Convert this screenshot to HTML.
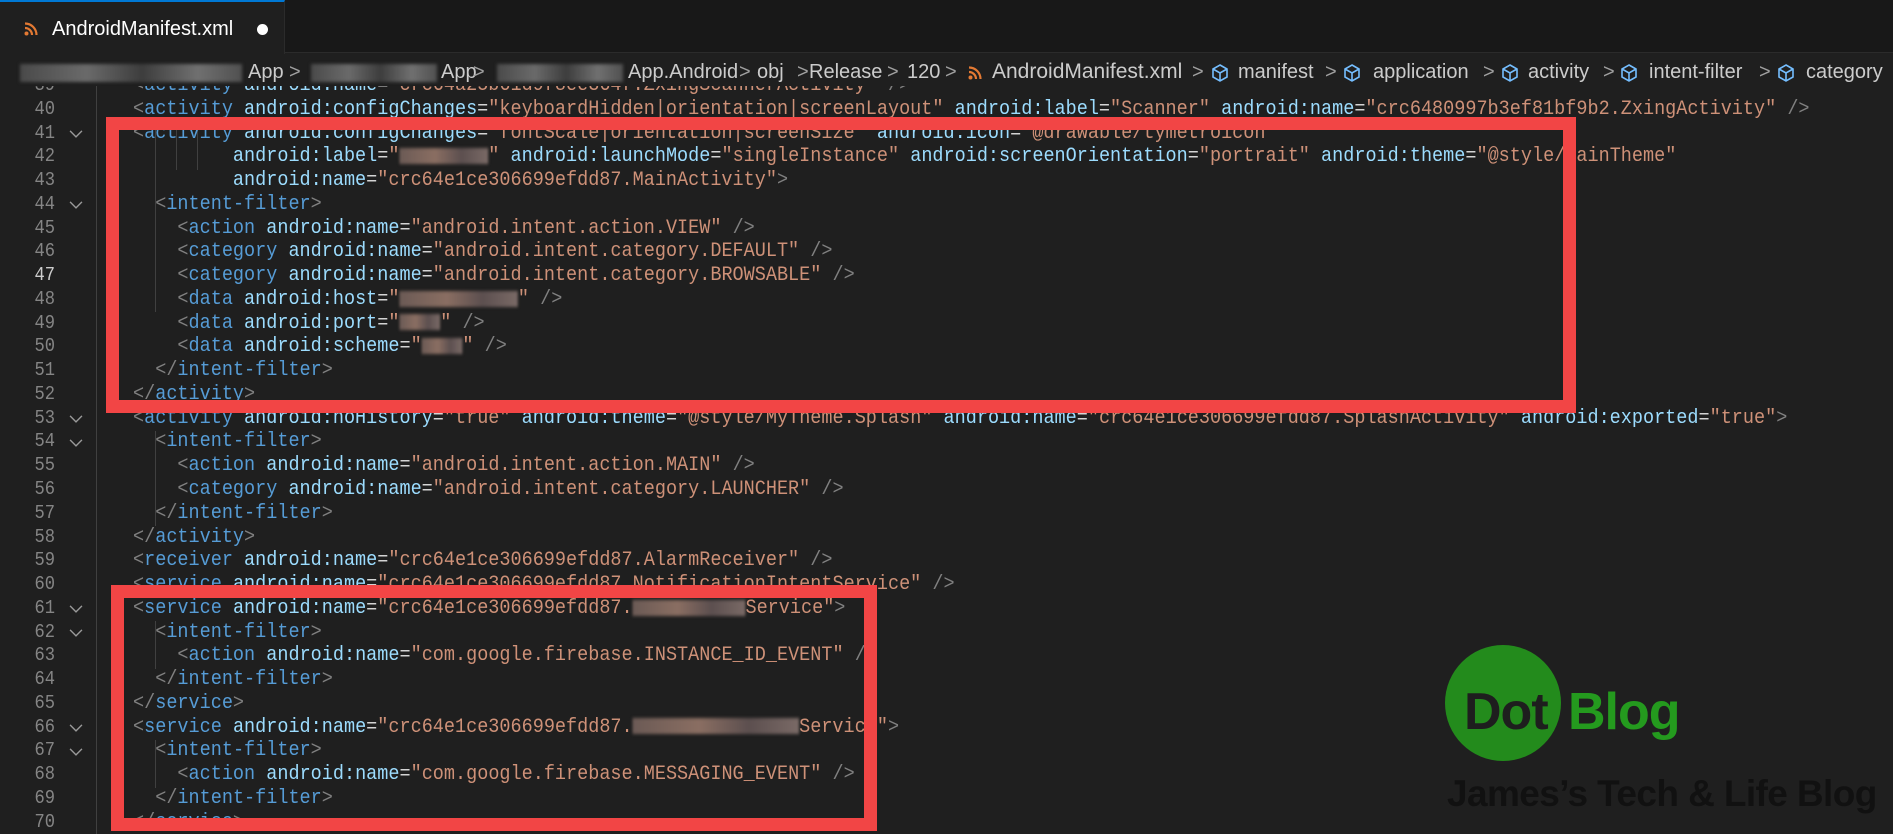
<!DOCTYPE html>
<html><head><meta charset="utf-8"><style>
*{margin:0;padding:0;box-sizing:border-box}
body{width:1893px;height:834px;background:#1f1f1f;overflow:hidden;position:relative;font-family:"Liberation Sans",sans-serif}
#tabbar{position:absolute;left:0;top:0;width:1893px;height:53px;background:#181818;border-bottom:1px solid #2b2b2b}
#tab{position:absolute;left:0;top:0;width:285px;height:54px;background:#1f1f1f;border-top:2px solid #0078d4;border-right:1px solid #2b2b2b}
#tab .name{position:absolute;left:52px;top:16px;color:#ffffff;font-size:20px}
#tab .dot{position:absolute;left:257px;top:22px;width:11px;height:11px;border-radius:50%;background:#fff}
.bc{position:absolute;top:61px;color:#cccccc;font-size:20px;white-space:nowrap}
.sep{position:absolute;top:61px;color:#a0a0a0;font-size:20px}
.blur{display:inline-block;background:linear-gradient(90deg,#4a4a4a,#6a6a6a 30%,#3d3d3d 55%,#707070 80%,#505050);filter:blur(1.5px);vertical-align:middle}
#editor{position:absolute;left:0;top:86px;width:1893px;height:748px;overflow:hidden}
pre{position:absolute;left:133px;top:-12px;font-family:"Liberation Mono",monospace;font-size:20px;line-height:23.77px;color:#d4d4d4;transform:scaleX(0.925);transform-origin:0 0}
.ln{position:absolute;left:0;top:-12px;width:55px;text-align:right;font-family:"Liberation Mono",monospace;font-size:19px;line-height:23.77px;color:#858585;transform:scaleX(0.9);transform-origin:100% 0}
.fold{position:absolute;left:68px;width:16px;height:23.77px}
.p{color:#808080}.t{color:#569cd6}.a{color:#9cdcfe}.s{color:#ce9178}
.guide{position:absolute;width:1px;background:#404040}
.box{position:absolute;border:13px solid #f24545}
.sb{display:inline-block;height:16px;background:linear-gradient(90deg,#6b5a55,#8a6e62 40%,#5c4f4f 70%,#7a6a66);filter:blur(1.5px);vertical-align:middle}
</style></head><body>
<div id="tabbar"></div>
<div id="tab">
<svg style="position:absolute;left:24px;top:20px" width="14" height="14" viewBox="0 0 14 14"><circle cx="2.5" cy="11.5" r="2" fill="#e37933"/><path d="M1 6a7 7 0 0 1 7 7M1 1.5a11.5 11.5 0 0 1 11.5 11.5" stroke="#e37933" stroke-width="2.2" fill="none"/></svg>
<span class="name">AndroidManifest.xml</span><span class="dot"></span></div>

<span class="bc" style="left:20px"><span class="blur" style="width:222px;height:18px"></span></span>
<span class="bc" style="left:248px">App</span><span class="sep" style="left:289px">&gt;</span>
<span class="bc" style="left:311px"><span class="blur" style="width:126px;height:18px"></span></span>
<span class="bc" style="left:441px">App</span><span class="sep" style="left:473px">&gt;</span>
<span class="bc" style="left:497px"><span class="blur" style="width:126px;height:18px"></span></span>
<span class="bc" style="left:628px">App.Android</span><span class="sep" style="left:739px">&gt;</span>
<span class="bc" style="left:757px">obj</span><span class="sep" style="left:797px">&gt;</span>
<span class="bc" style="left:809px">Release</span><span class="sep" style="left:887px">&gt;</span>
<span class="bc" style="left:907px">120</span><span class="sep" style="left:945px">&gt;</span>
<svg style="position:absolute;left:968px;top:66px" width="14" height="14" viewBox="0 0 14 14"><circle cx="2.5" cy="11.5" r="2" fill="#e37933"/><path d="M1 6a7 7 0 0 1 7 7M1 1.5a11.5 11.5 0 0 1 11.5 11.5" stroke="#e37933" stroke-width="2.2" fill="none"/></svg>
<span class="bc" style="left:992px;font-size:21px;top:60px">AndroidManifest.xml</span><span class="sep" style="left:1192px">&gt;</span>
<svg style="position:absolute;left:1210px;top:63px" width="20" height="20" viewBox="0 0 20 20"><path d="M10 2l7 4v8l-7 4-7-4V6zM3 6l7 4 7-4M10 10v8" stroke="#75beff" stroke-width="1.6" fill="none"/></svg>
<span class="bc" style="left:1238px">manifest</span><span class="sep" style="left:1325px">&gt;</span>
<svg style="position:absolute;left:1342px;top:63px" width="20" height="20" viewBox="0 0 20 20"><path d="M10 2l7 4v8l-7 4-7-4V6zM3 6l7 4 7-4M10 10v8" stroke="#75beff" stroke-width="1.6" fill="none"/></svg>
<span class="bc" style="left:1373px">application</span><span class="sep" style="left:1483px">&gt;</span>
<svg style="position:absolute;left:1500px;top:63px" width="20" height="20" viewBox="0 0 20 20"><path d="M10 2l7 4v8l-7 4-7-4V6zM3 6l7 4 7-4M10 10v8" stroke="#75beff" stroke-width="1.6" fill="none"/></svg>
<span class="bc" style="left:1528px">activity</span><span class="sep" style="left:1603px">&gt;</span>
<svg style="position:absolute;left:1619px;top:63px" width="20" height="20" viewBox="0 0 20 20"><path d="M10 2l7 4v8l-7 4-7-4V6zM3 6l7 4 7-4M10 10v8" stroke="#75beff" stroke-width="1.6" fill="none"/></svg>
<span class="bc" style="left:1649px">intent-filter</span><span class="sep" style="left:1759px">&gt;</span>
<svg style="position:absolute;left:1776px;top:63px" width="20" height="20" viewBox="0 0 20 20"><path d="M10 2l7 4v8l-7 4-7-4V6zM3 6l7 4 7-4M10 10v8" stroke="#75beff" stroke-width="1.6" fill="none"/></svg>
<span class="bc" style="left:1806px">category</span>

<div id="editor">
<div class="ln">39<br>40<br>41<br>42<br>43<br>44<br>45<br>46<br><span style="color:#cccccc">47</span><br>48<br>49<br>50<br>51<br>52<br>53<br>54<br>55<br>56<br>57<br>58<br>59<br>60<br>61<br>62<br>63<br>64<br>65<br>66<br>67<br>68<br>69<br>70<br>71</div>
<svg class="fold" style="top:36px" viewBox="0 0 16 24"><path d="M2 9l6 6 6-6" stroke="#9a9a9a" stroke-width="1.4" fill="none"/></svg>
<svg class="fold" style="top:107px" viewBox="0 0 16 24"><path d="M2 9l6 6 6-6" stroke="#9a9a9a" stroke-width="1.4" fill="none"/></svg>
<svg class="fold" style="top:321px" viewBox="0 0 16 24"><path d="M2 9l6 6 6-6" stroke="#9a9a9a" stroke-width="1.4" fill="none"/></svg>
<svg class="fold" style="top:345px" viewBox="0 0 16 24"><path d="M2 9l6 6 6-6" stroke="#9a9a9a" stroke-width="1.4" fill="none"/></svg>
<svg class="fold" style="top:511px" viewBox="0 0 16 24"><path d="M2 9l6 6 6-6" stroke="#9a9a9a" stroke-width="1.4" fill="none"/></svg>
<svg class="fold" style="top:535px" viewBox="0 0 16 24"><path d="M2 9l6 6 6-6" stroke="#9a9a9a" stroke-width="1.4" fill="none"/></svg>
<svg class="fold" style="top:630px" viewBox="0 0 16 24"><path d="M2 9l6 6 6-6" stroke="#9a9a9a" stroke-width="1.4" fill="none"/></svg>
<svg class="fold" style="top:654px" viewBox="0 0 16 24"><path d="M2 9l6 6 6-6" stroke="#9a9a9a" stroke-width="1.4" fill="none"/></svg>
<div class="guide" style="left:96px;top:0;height:748px"></div>
<div class="guide" style="left:155px;top:36px;height:190px"></div>
<div class="guide" style="left:176px;top:36px;height:48px"></div>
<div class="guide" style="left:197px;top:36px;height:48px"></div>
<div class="guide" style="left:155px;top:345px;height:95px"></div>
<div class="guide" style="left:155px;top:535px;height:48px"></div>
<div class="guide" style="left:155px;top:654px;height:48px"></div>
<pre><span class="p">&lt;</span><span class="t">activity</span> <span class="a">android:name</span>=<span class="s">"crc64a25b61d9f8ee364f.ZxingScannerActivity"</span> <span class="p">/&gt;</span>
<span class="p">&lt;</span><span class="t">activity</span> <span class="a">android:configChanges</span>=<span class="s">"keyboardHidden|orientation|screenLayout"</span> <span class="a">android:label</span>=<span class="s">"Scanner"</span> <span class="a">android:name</span>=<span class="s">"crc6480997b3ef81bf9b2.ZxingActivity"</span> <span class="p">/&gt;</span>
<span class="p">&lt;</span><span class="t">activity</span> <span class="a">android:configChanges</span>=<span class="s">"fontScale|orientation|screenSize"</span> <span class="a">android:icon</span>=<span class="s">"@drawable/tymetroicon"</span>
         <span class="a">android:label</span>=<span class="s">"<span class="sb" style="width:96px"></span>"</span> <span class="a">android:launchMode</span>=<span class="s">"singleInstance"</span> <span class="a">android:screenOrientation</span>=<span class="s">"portrait"</span> <span class="a">android:theme</span>=<span class="s">"@style/MainTheme"</span>
         <span class="a">android:name</span>=<span class="s">"crc64e1ce306699efdd87.MainActivity"</span><span class="p">&gt;</span>
  <span class="p">&lt;</span><span class="t">intent-filter</span><span class="p">&gt;</span>
    <span class="p">&lt;</span><span class="t">action</span> <span class="a">android:name</span>=<span class="s">"android.intent.action.VIEW"</span> <span class="p">/&gt;</span>
    <span class="p">&lt;</span><span class="t">category</span> <span class="a">android:name</span>=<span class="s">"android.intent.category.DEFAULT"</span> <span class="p">/&gt;</span>
    <span class="p">&lt;</span><span class="t">category</span> <span class="a">android:name</span>=<span class="s">"android.intent.category.BROWSABLE"</span> <span class="p">/&gt;</span>
    <span class="p">&lt;</span><span class="t">data</span> <span class="a">android:host</span>=<span class="s">"<span class="sb" style="width:128px"></span>"</span> <span class="p">/&gt;</span>
    <span class="p">&lt;</span><span class="t">data</span> <span class="a">android:port</span>=<span class="s">"<span class="sb" style="width:44px"></span>"</span> <span class="p">/&gt;</span>
    <span class="p">&lt;</span><span class="t">data</span> <span class="a">android:scheme</span>=<span class="s">"<span class="sb" style="width:44px"></span>"</span> <span class="p">/&gt;</span>
  <span class="p">&lt;/</span><span class="t">intent-filter</span><span class="p">&gt;</span>
<span class="p">&lt;/</span><span class="t">activity</span><span class="p">&gt;</span>
<span class="p">&lt;</span><span class="t">activity</span> <span class="a">android:noHistory</span>=<span class="s">"true"</span> <span class="a">android:theme</span>=<span class="s">"@style/MyTheme.Splash"</span> <span class="a">android:name</span>=<span class="s">"crc64e1ce306699efdd87.SplashActivity"</span> <span class="a">android:exported</span>=<span class="s">"true"</span><span class="p">&gt;</span>
  <span class="p">&lt;</span><span class="t">intent-filter</span><span class="p">&gt;</span>
    <span class="p">&lt;</span><span class="t">action</span> <span class="a">android:name</span>=<span class="s">"android.intent.action.MAIN"</span> <span class="p">/&gt;</span>
    <span class="p">&lt;</span><span class="t">category</span> <span class="a">android:name</span>=<span class="s">"android.intent.category.LAUNCHER"</span> <span class="p">/&gt;</span>
  <span class="p">&lt;/</span><span class="t">intent-filter</span><span class="p">&gt;</span>
<span class="p">&lt;/</span><span class="t">activity</span><span class="p">&gt;</span>
<span class="p">&lt;</span><span class="t">receiver</span> <span class="a">android:name</span>=<span class="s">"crc64e1ce306699efdd87.AlarmReceiver"</span> <span class="p">/&gt;</span>
<span class="p">&lt;</span><span class="t">service</span> <span class="a">android:name</span>=<span class="s">"crc64e1ce306699efdd87.NotificationIntentService"</span> <span class="p">/&gt;</span>
<span class="p">&lt;</span><span class="t">service</span> <span class="a">android:name</span>=<span class="s">"crc64e1ce306699efdd87.<span class="sb" style="width:122px"></span>Service"</span><span class="p">&gt;</span>
  <span class="p">&lt;</span><span class="t">intent-filter</span><span class="p">&gt;</span>
    <span class="p">&lt;</span><span class="t">action</span> <span class="a">android:name</span>=<span class="s">"com.google.firebase.INSTANCE_ID_EVENT"</span> <span class="p">/&gt;</span>
  <span class="p">&lt;/</span><span class="t">intent-filter</span><span class="p">&gt;</span>
<span class="p">&lt;/</span><span class="t">service</span><span class="p">&gt;</span>
<span class="p">&lt;</span><span class="t">service</span> <span class="a">android:name</span>=<span class="s">"crc64e1ce306699efdd87.<span class="sb" style="width:180px"></span>Service"</span><span class="p">&gt;</span>
  <span class="p">&lt;</span><span class="t">intent-filter</span><span class="p">&gt;</span>
    <span class="p">&lt;</span><span class="t">action</span> <span class="a">android:name</span>=<span class="s">"com.google.firebase.MESSAGING_EVENT"</span> <span class="p">/&gt;</span>
  <span class="p">&lt;/</span><span class="t">intent-filter</span><span class="p">&gt;</span>
<span class="p">&lt;/</span><span class="t">service</span><span class="p">&gt;</span>
</pre>
</div>
<div class="box" style="left:106px;top:117px;width:1470px;height:296px"></div>
<div class="box" style="left:111px;top:585px;width:766px;height:246px"></div>

<div style="position:absolute;left:1445px;top:645px;width:116px;height:116px;border-radius:50%;background:#238b1c"></div>
<div style="position:absolute;left:1464px;top:682px;font-size:52px;font-weight:bold;color:#1e1e1e;line-height:60px;letter-spacing:-1px">Dot</div>
<div style="position:absolute;left:1568px;top:682px;font-size:52px;font-weight:bold;color:#249a1e;line-height:60px;letter-spacing:-1px">Blog</div>
<div style="position:absolute;left:1447px;top:772px;font-size:37px;font-weight:bold;color:#111;line-height:44px;letter-spacing:-0.6px;white-space:nowrap">James’s Tech &amp; Life Blog</div>
</body></html>
